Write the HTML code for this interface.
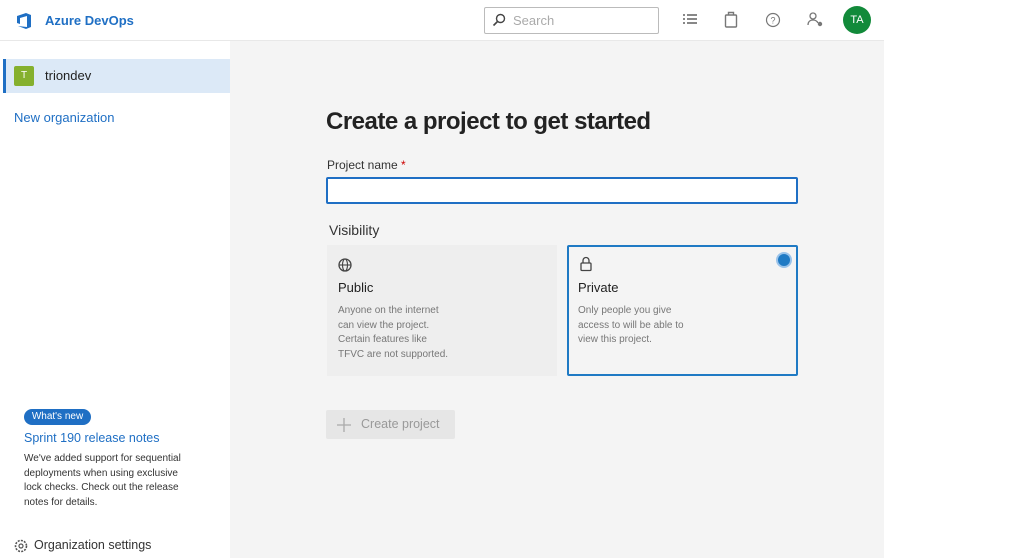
<!DOCTYPE html>
<html><head><style>
*{margin:0;padding:0;box-sizing:border-box}
body{width:1024px;height:558px;position:relative;background:#fff;font-family:"Liberation Sans",sans-serif;overflow:hidden;color:#222}
.abs{position:absolute}
#main{left:230px;top:41px;width:654px;height:517px;background:#f4f4f4}
#hdr{left:0;top:0;width:884px;height:41px;background:#fff;border-bottom:1px solid #e8e8e8}
.t{position:absolute;white-space:nowrap}
</style></head><body>
<div class="abs" id="main"></div>
<div class="abs" id="hdr"></div>
<svg class="abs" style="left:14px;top:11px" width="20" height="20" viewBox="0 0 20 20"><path d="M3 5 L12 2 L17 4 V16 L12 18 L4 15 L13 16 V5 L6 7 V13 L3 12 Z" fill="#1f6fc4"/></svg>
<div class="t" style="left:45px;top:13px;font-size:13px;font-weight:bold;color:#1f6fc4">Azure DevOps</div>
<div class="abs" style="left:484px;top:7px;width:175px;height:27px;border:1px solid #bbb;border-radius:2px"></div>
<svg class="abs" style="left:492px;top:13px" width="14" height="14" viewBox="0 0 14 14"><circle cx="8.5" cy="5.5" r="4" fill="none" stroke="#444" stroke-width="1.4"/><path d="M5.5 8.5 L1.5 12.5" stroke="#444" stroke-width="1.6"/></svg>
<div class="t" style="left:513px;top:13px;font-size:13px;color:#aaa">Search</div>
<svg class="abs" style="left:682px;top:13px" width="16" height="14"><path d="M1 2h2M1 6h2M1 10h2M5 2h10M5 6h10M5 10h10" stroke="#888" stroke-width="2"/></svg>
<svg class="abs" style="left:724px;top:10px" width="14" height="19"><rect x="1.5" y="5" width="11" height="12" rx="1" fill="none" stroke="#777" stroke-width="1.4"/><path d="M4.5 5V2.5h5V5" fill="none" stroke="#777" stroke-width="1.4"/></svg>
<svg class="abs" style="left:765px;top:12px" width="16" height="16"><circle cx="8" cy="8" r="6.5" fill="none" stroke="#777" stroke-width="1.2"/><text x="8" y="11.5" font-size="9" text-anchor="middle" fill="#777" font-family="Liberation Sans">?</text></svg>
<svg class="abs" style="left:807px;top:11px" width="17" height="17"><circle cx="6" cy="5" r="3" fill="none" stroke="#777" stroke-width="1.3"/><path d="M1 14c0-4 3-5 5-5s4 1 5 3" fill="none" stroke="#777" stroke-width="1.3"/><circle cx="13" cy="13" r="2.2" fill="#777"/></svg>
<div class="abs" style="left:843px;top:6px;width:28px;height:28px;border-radius:50%;background:#128a3a;color:#fff;font-size:11px;text-align:center;line-height:28px">TA</div>
<div class="abs" style="left:3px;top:59px;width:227px;height:34px;background:#dce9f7;border-left:3px solid #1f6fc4"></div>
<div class="abs" style="left:14px;top:66px;width:20px;height:20px;background:#85b02e;border-radius:2px;color:#fff;font-size:10px;text-align:center;line-height:20px">T</div>
<div class="t" style="left:45px;top:68px;font-size:13px;color:#222">triondev</div>
<div class="t" style="left:14px;top:110px;font-size:13px;color:#1f6fc4">New organization</div>
<div class="abs" style="left:24px;top:409px;width:67px;height:16px;border-radius:8px;background:#1f6fc4;color:#fff;font-size:10px;text-align:center;line-height:16px">What's new</div>
<div class="t" style="left:24px;top:431px;font-size:12.5px;color:#1f6fc4">Sprint 190 release notes</div>
<div class="t" style="left:24px;top:452px;font-size:10px;color:#333;line-height:14.5px">We've added support for sequential<br>deployments when using exclusive<br>lock checks. Check out the release<br>notes for details.</div>
<svg class="abs" style="left:13px;top:538px" width="16" height="16"><circle cx="8" cy="8" r="5.5" fill="none" stroke="#555" stroke-width="1.6" stroke-dasharray="2 1.2"/><circle cx="8" cy="8" r="2" fill="none" stroke="#555" stroke-width="1.2"/></svg>
<div class="t" style="left:34px;top:538px;font-size:12.5px;color:#333">Organization settings</div>
<div class="t" style="left:326px;top:108px;font-size:24px;font-weight:bold;color:#222;letter-spacing:-0.5px">Create a project to get started</div>
<div class="t" style="left:327px;top:158px;font-size:12px;color:#333">Project name <span style="color:#c00">*</span></div>
<div class="abs" style="left:326px;top:177px;width:472px;height:27px;border:2px solid #1f6fc4;border-radius:2px;background:#fff"></div>
<div class="t" style="left:329px;top:222px;font-size:14px;color:#333">Visibility</div>
<div class="abs" style="left:327px;top:245px;width:230px;height:131px;background:#eeeeee"></div>
<svg class="abs" style="left:337px;top:257px" width="16" height="16"><circle cx="8" cy="8" r="6" fill="none" stroke="#444" stroke-width="1.3"/><ellipse cx="8" cy="8" rx="2.5" ry="6" fill="none" stroke="#444" stroke-width="1.1"/><path d="M2 8h12" stroke="#444" stroke-width="1.1"/></svg>
<div class="t" style="left:338px;top:280px;font-size:13px;color:#222">Public</div>
<div class="t" style="left:338px;top:304px;font-size:10px;color:#777;line-height:14.5px">Anyone on the internet<br>can view the project.<br>Certain features like<br>TFVC are not supported.</div>
<div class="abs" style="left:567px;top:245px;width:231px;height:131px;background:#f4f4f4;border:2px solid #1f7ac4;border-radius:2px"></div>
<svg class="abs" style="left:579px;top:256px" width="14" height="16"><path d="M4 7V4.5a3 3 0 0 1 6 0V7" fill="none" stroke="#444" stroke-width="1.3"/><rect x="2" y="7" width="10" height="7.5" rx="1" fill="none" stroke="#444" stroke-width="1.3"/></svg>
<div class="t" style="left:578px;top:280px;font-size:13px;color:#222">Private</div>
<div class="t" style="left:578px;top:304px;font-size:10px;color:#777;line-height:14.5px">Only people you give<br>access to will be able to<br>view this project.</div>
<div class="abs" style="left:776px;top:252px;width:16px;height:16px;border-radius:50%;background:#1f7ac4;border:2px solid #9ac3ea"></div>
<div class="abs" style="left:326px;top:410px;width:129px;height:29px;background:#e6e6e6;border-radius:2px"></div>
<svg class="abs" style="left:336px;top:417px" width="16" height="16"><path d="M8 1v14M1 8h14" stroke="#aaa" stroke-width="1.3"/></svg>
<div class="t" style="left:361px;top:417px;font-size:12.5px;color:#999">Create project</div>
</body></html>
